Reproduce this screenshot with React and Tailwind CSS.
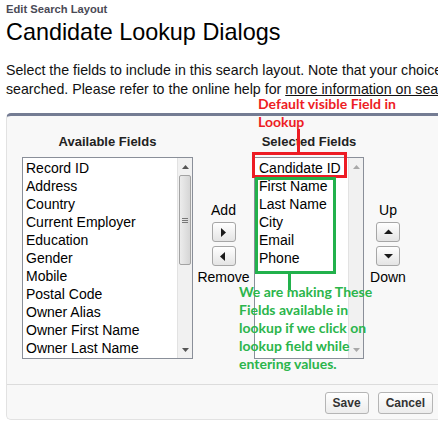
import React from 'react'

const available = [
  'Record ID',
  'Address',
  'Country',
  'Current Employer',
  'Education',
  'Gender',
  'Mobile',
  'Postal Code',
  'Owner Alias',
  'Owner First Name',
  'Owner Last Name',
]

const selected = ['Candidate ID', 'First Name', 'Last Name', 'City', 'Email', 'Phone']

const arrows = {
  right: '3,1 8,5.5 3,10',
  left: '7,1 2,5.5 7,10',
  up: '1,7 5.5,2.5 10,7',
  down: '1,3 5.5,7.5 10,3',
}

function ArrowBtn({ dir }) {
  return (
    <button
      type="button"
      className="flex h-[20px] w-[24px] items-center justify-center rounded-[3px] border border-[#a6a6a6] bg-linear-to-b from-white to-[#e4e4e4]"
    >
      <svg width="11" height="11" viewBox="0 0 11 11">
        <polygon points={arrows[dir]} fill="#1a1a1a" />
      </svg>
    </button>
  )
}

function Scrollbar({ thumb }) {
  const c = thumb ? '#555' : '#a8a8a8'
  return (
    <div className="flex w-[15px] flex-col border-l border-[#e2e2e2] bg-[#f1f1f1]">
      <div className="flex h-[17px] items-center justify-center">
        <svg width="7" height="4" viewBox="0 0 7 4">
          <polygon points="0,4 3.5,0 7,4" fill={c} />
        </svg>
      </div>
      <div className="flex-1 px-[1px]">
        {thumb && (
          <div className="flex h-[90px] items-center justify-center rounded-[2px] border border-[#a3a3a3] bg-linear-to-r from-[#ececec] to-[#d6d6d6]">
            <div className="flex flex-col gap-[1px]">
              <div className="h-[1px] w-[6px] bg-[#777]" />
              <div className="h-[1px] w-[6px] bg-[#777]" />
              <div className="h-[1px] w-[6px] bg-[#777]" />
            </div>
          </div>
        )}
      </div>
      <div className="flex h-[17px] items-center justify-center">
        <svg width="7" height="4" viewBox="0 0 7 4">
          <polygon points="0,0 3.5,4 7,0" fill={c} />
        </svg>
      </div>
    </div>
  )
}

function ListBox({ items, width, thumb, padLeft }) {
  return (
    <div className={`flex h-[202px] border border-[#8a8f99] bg-white ${width}`}>
      <div className={`flex-1 overflow-hidden pt-[1px] text-[14px] leading-[18px] text-black ${padLeft}`}>
        {items.map((it) => (
          <div key={it} className="whitespace-nowrap">{it}</div>
        ))}
      </div>
      <Scrollbar thumb={thumb} />
    </div>
  )
}

export default function App() {
  return (
    <div className="relative h-[422px] w-[438px] overflow-hidden bg-white font-['Liberation_Sans',Arial,sans-serif]">
      <div className="px-[6px] pt-[2px]">
        <div className="text-[11.2px] font-bold leading-[14px] text-[#4a4a56]">Edit Search Layout</div>
        <h1 className="mt-[2px] text-[23.4px] leading-[28px] text-black">Candidate Lookup Dialogs</h1>
        <p className="mt-[15px] text-[14.2px] leading-[19px] text-[#111]">
          <span className="block whitespace-nowrap">
            Select the fields to include in this search layout. Note that your choices here do not change which fields are
          </span>
          <span className="block whitespace-nowrap">
            searched. Please refer to the online help for <span className="underline">more information on search layouts.</span>
          </span>
        </p>
      </div>

      <div className="ml-[6px] mt-[14px] w-[470px] rounded-l-[5px] border-t-[3px] border-b border-l border-t-[#747c93] border-b-[#e2e2e2] border-l-[#e2e2e2] bg-[#f8f8f8]">
        <div className="flex items-start pb-[25px] pl-[15px] pt-[18px]">
          <div className="w-[171px]">
            <div className="text-center text-[13px] font-bold leading-[16px] text-[#222]">Available Fields</div>
            <div className="mt-[7px]">
              <ListBox items={available} width="w-[171px]" thumb padLeft="pl-[3px]" />
            </div>
          </div>

          <div className="flex w-[61px] flex-col items-center pt-[68px] text-[14px] leading-[16px] text-black">
            <div>Add</div>
            <div className="mt-[4px] flex flex-col gap-[4px]">
              <ArrowBtn dir="right" />
              <ArrowBtn dir="left" />
            </div>
            <div className="mt-[3px]">Remove</div>
          </div>

          <div className="w-[110px]">
            <div className="text-center text-[13px] font-bold leading-[16px] text-[#222]">Selected Fields</div>
            <div className="mt-[7px]">
              <ListBox items={selected} width="w-[110px]" padLeft="pl-[4px]" />
            </div>
          </div>

          <div className="flex w-[48px] flex-col items-center pt-[68px] text-[14px] leading-[16px] text-black">
            <div>Up</div>
            <div className="mt-[4px] flex flex-col gap-[4px]">
              <ArrowBtn dir="up" />
              <ArrowBtn dir="down" />
            </div>
            <div className="mt-[3px]">Down</div>
          </div>
        </div>

        <div className="flex justify-end gap-[9px] border-t border-[#dcdcdc] pb-[5px] pr-[43px] pt-[7px]">
          <button type="button" className="h-[22px] rounded-[3px] border border-[#b5b5b5] bg-linear-to-b from-white to-[#ececec] px-[7px] text-[12px] font-bold text-[#333]">
            Save
          </button>
          <button type="button" className="h-[22px] rounded-[3px] border border-[#b5b5b5] bg-linear-to-b from-white to-[#ececec] px-[7px] text-[12px] font-bold text-[#333]">
            Cancel
          </button>
        </div>
      </div>

      {/* annotations drawn over the screenshot */}
      <div className="absolute left-[258px] top-[95px] font-['Lato',sans-serif] text-[14px] font-bold leading-[18px] text-[#ed1c24]">
        <div className="whitespace-nowrap">Default visible Field in</div>
        <div>Lookup</div>
      </div>
      <div className="absolute left-[297px] top-[129px] h-[23px] w-[3px] bg-[#ed1c24]" />
      <div className="absolute left-[252px] top-[152px] h-[26px] w-[95px] border-[3px] border-[#ed1c24]" />

      <div className="absolute left-[255px] top-[177px] h-[97px] w-[81px] border-[3px] border-[#22b14c]" />
      <div className="absolute left-[288px] top-[274px] h-[16px] w-[3px] bg-[#22b14c]" />
      <div className="absolute left-[239px] top-[283px] font-['Lato',sans-serif] text-[14px] font-bold leading-[18px] text-[#2bb54b]">
        <div className="whitespace-nowrap">We are making These</div>
        <div className="whitespace-nowrap">Fields available in</div>
        <div className="whitespace-nowrap">lookup if we click on</div>
        <div className="whitespace-nowrap">lookup field while</div>
        <div className="whitespace-nowrap">entering values.</div>
      </div>
    </div>
  )
}
